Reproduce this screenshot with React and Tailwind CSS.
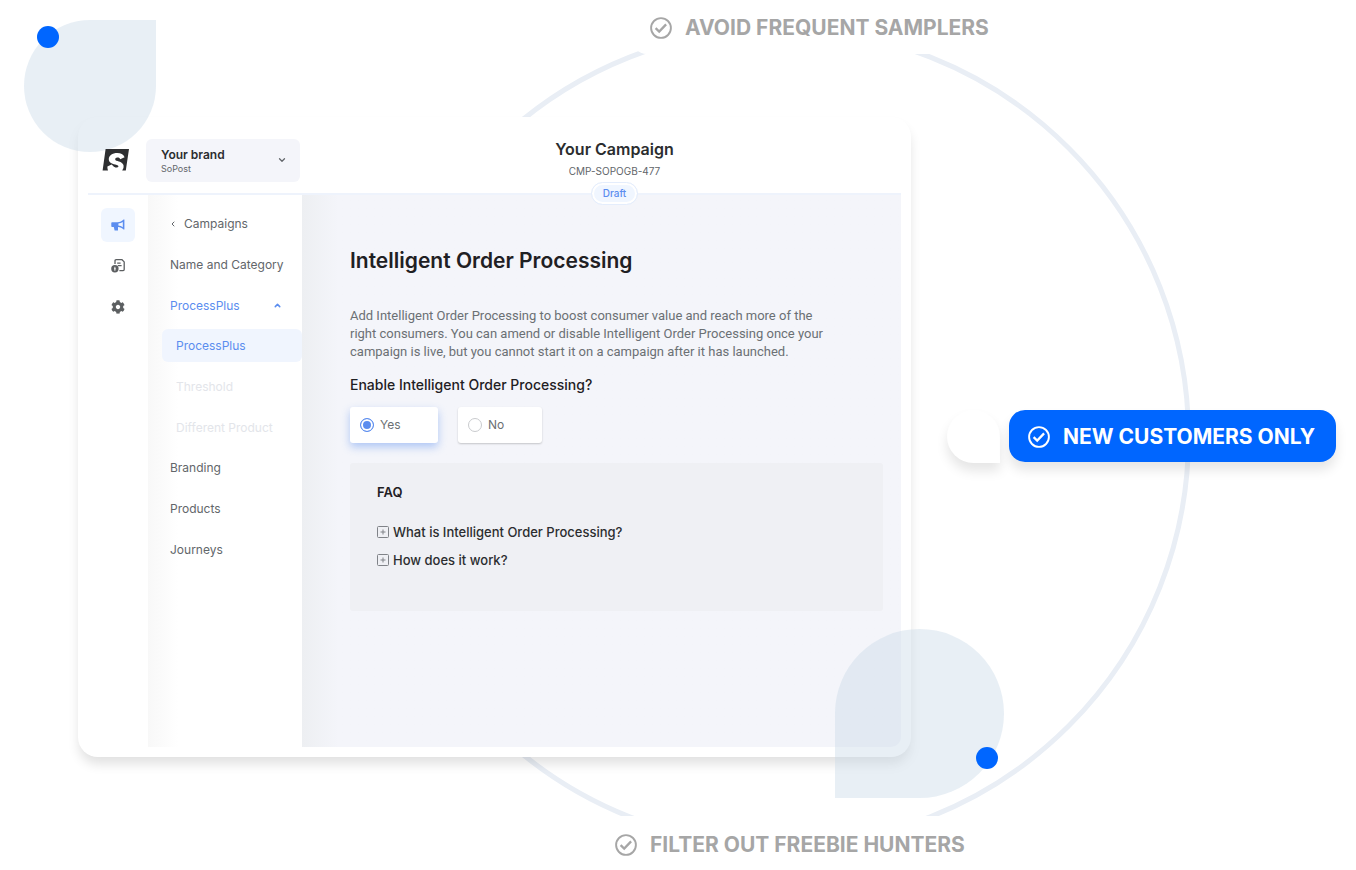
import { useState } from "react";
import { FaCog } from "react-icons/fa";
import { FiChevronDown, FiChevronLeft, FiChevronUp } from "react-icons/fi";

const faqs = ["What is Intelligent Order Processing?", "How does it work?"];

function CheckIcon() {
  return (
    <svg viewBox="0 0 22 22" className="w-[22px] h-[22px] shrink-0" fill="none" stroke="currentColor" aria-hidden="true">
      <circle cx="11" cy="11" r="9.9" strokeWidth="1.9" />
      <path d="M5.6 11.2l3.6 3.4 6.9-7.2" strokeWidth="2.3" />
    </svg>
  );
}

function Pill({ children, className }) {
  return (
    <div
      className={`flex items-center gap-[13px] pl-[19px] pr-5 rounded-2xl text-[21px] leading-6 font-bold whitespace-nowrap shrink-0 ${className}`}
    >
      <CheckIcon />
      <span>{children}</span>
    </div>
  );
}

function Logo() {
  return (
    <svg viewBox="0 0 27 22" className="relative z-20 w-[27px] h-[22px]" aria-label="SoPost">
      <path d="M3.6 0H27L23.8 21.5H20.2Q22 19.5 21.6 16.8C21 13.4 17.5 12.6 14.5 11.8C12.6 11.2 12.8 8.8 15.2 8.6C17 8.5 17.8 9.2 18.2 10.2L22.6 8.2C21.4 5.4 18.8 4 15.4 4C10.2 4 6.8 6.6 6.8 10.2C6.8 13.4 9.4 14.6 13.2 15.4C16 16 16.6 16.6 16.4 17.4C16 18.8 12.6 19 11.2 17L9.6 15.6L5.4 17.6C5.4 19.4 5.6 20.4 6 21.5H0.6Z" fill="#2e2f31" />
    </svg>
  );
}

function MegaphoneIcon() {
  return (
    <svg viewBox="0 0 14 14" className="w-[14px] h-[14px]" aria-hidden="true">
      <path d="M1 4.2H6.4C9 4 11 3 12.6 1.4H13.4V11.6H12.6C11 10 9.4 9.2 7 9.1V12.6H3.6L2.8 9H1Q0.3 9 0.3 8V5.2Q0.3 4.2 1 4.2Z" fill="#5b8def" />
      <path d="M7.4 5.6Q10 5.1 11.8 3.9V9.2Q10 8 7.4 7.6Z" fill="#f0f6ff" />
    </svg>
  );
}

function OrdersIcon() {
  return (
    <svg viewBox="0 0 14 14" className="w-[14px] h-[14px]" fill="none" stroke="#5c5f61" aria-hidden="true">
      <path d="M4 5V1.8Q4 .7 5.1 .7H11L13.2 2.9V10.6Q13.2 11.7 12.1 11.7H8.4" strokeWidth="1.3" />
      <path d="M6.2 4.2H9.6M6.8 6.7H10.6" strokeWidth="1.2" />
      <circle cx="3.9" cy="9.8" r="3.7" fill="#5c5f61" stroke="none" />
      <path d="M3.9 7.8V11.8M3 9.8H4.8" stroke="#fff" strokeWidth=".9" />
    </svg>
  );
}

function NavItem({ children, className = "text-[#62666a]" }) {
  return (
    <li>
      <a href="#" className={`flex items-center h-[33px] px-2 ${className}`}>
        {children}
      </a>
    </li>
  );
}

function Sidebar() {
  return (
    <div className="flex shrink-0 w-[214px]">
      <div className="flex flex-col items-center gap-[7px] w-[60px] pt-[13px]">
        <button aria-label="Campaigns" className="grid place-items-center w-[34px] h-[34px] rounded-md bg-[#f0f6ff]">
          <MegaphoneIcon />
        </button>
        <button aria-label="Orders" className="grid place-items-center w-[34px] h-[34px]">
          <OrdersIcon />
        </button>
        <button aria-label="Settings" className="grid place-items-center w-[34px] h-[34px] text-[#5c5f61]">
          <FaCog size={14} />
        </button>
      </div>

      <nav className="flex flex-col gap-[7px] flex-1 pt-3 pl-[14px] text-xs bg-linear-to-r from-[#f8f8f8] to-white to-20%">
        <ul className="flex flex-col gap-2">
          <NavItem>
            <FiChevronLeft size={8} strokeWidth={3} className="-ml-px mr-[7px]" />
            Campaigns
          </NavItem>
          <NavItem>Name and Category</NavItem>
          <NavItem className="text-[#5b8def]">
            <span className="flex-1">ProcessPlus</span>
            <FiChevronUp size={9} strokeWidth={4} className="mr-3" />
          </NavItem>
        </ul>
        <ul className="flex flex-col gap-2">
          <NavItem className="pl-[14px] rounded-md text-[#5b8def] bg-[#f0f5fe]">ProcessPlus</NavItem>
          <NavItem className="pl-[14px] text-[#e3e5ea]">Threshold</NavItem>
          <NavItem className="pl-[14px] text-[#e3e5ea]">Different Product</NavItem>
        </ul>
        <ul className="flex flex-col gap-2">
          <NavItem>Branding</NavItem>
          <NavItem>Products</NavItem>
          <NavItem>Journeys</NavItem>
        </ul>
      </nav>
    </div>
  );
}

function RadioCard({ value, label, checked, onChange }) {
  return (
    <label
      className={`flex items-center gap-[6px] h-9 pl-[10px] rounded-[3px] bg-white text-xs text-[#6b6f73] cursor-pointer ${
        checked ? "w-[88px] shadow-[0_4px_9px_rgba(91,141,239,0.45)]" : "w-[84px] shadow-[0_1px_2px_rgba(0,0,0,0.2)]"
      }`}
    >
      <input
        type="radio"
        name="enableProcessing"
        value={value}
        checked={checked}
        onChange={onChange}
        className="appearance-none w-[14px] h-[14px] rounded-full border border-[#c9cbce] bg-white checked:border-[#5b8def] checked:bg-[#5b8def] checked:shadow-[inset_0_0_0_2px_white]"
      />
      {label}
    </label>
  );
}

function App() {
  const [enabled, setEnabled] = useState("yes");

  return (
    <div className="relative flex flex-col overflow-hidden bg-white font-['Inter',sans-serif] text-[#2b2d2f]">
      {/* background ring */}
      <svg viewBox="0 0 822 822" className="absolute right-[165px] top-[26px] w-[822px] h-[822px]" fill="none" aria-hidden="true">
        <circle cx="411" cy="411" r="408.5" stroke="#e9eef5" strokeWidth="5" />
      </svg>

      <div className="relative flex justify-end pr-[341px]">
        <Pill className="w-[384px] h-[54px] pt-[2px] bg-white text-[#a6a6a6]">AVOID FREQUENT SAMPLERS</Pill>
      </div>

      <div className="relative flex items-center pt-[63px] pb-[59px] pl-[78px] pr-5">
        <div className="relative flex-1 p-[10px] pt-0 rounded-[20px] bg-white shadow-[0_8px_12px_-1px_rgba(0,0,0,0.12)]">
          <header className="flex h-[78px] border-b-2 border-[#eef3fc]">
            <div className="flex items-center shrink-0 w-[212px] pl-[14px] pt-[10px]">
              <Logo />
              <button
                aria-haspopup="listbox"
                className="flex items-center justify-between flex-1 h-[43px] ml-[17px] pl-[15px] pr-[13px] rounded-md text-left bg-[#f4f5fa]"
              >
                <span className="flex flex-col pt-px">
                  <span className="text-xs leading-[15px] font-semibold">Your brand</span>
                  <span className="text-[9px] leading-[13px] text-[#62666a]">SoPost</span>
                </span>
                <FiChevronDown size={10} strokeWidth={3} className="text-[#62666a]" />
              </button>
            </div>
            <div className="relative flex flex-col items-center flex-1 pl-7 pt-[21px]">
              <h2 className="text-base leading-[23px] font-semibold">Your Campaign</h2>
              <p className="text-[10px] leading-5 text-[#62666a]">CMP-SOPOGB-477</p>
              <div className="absolute inset-x-0 top-[65px] z-10 flex justify-center pl-7">
                <span className="h-[23px] px-[11px] rounded-full border border-[#e4edfc] bg-[#f0f6ff] shadow-[inset_0_0_0_2px_white] text-[10px] leading-[21px] font-medium text-[#5b8def]">
                  Draft
                </span>
              </div>
            </div>
          </header>

          <div className="flex">
            <Sidebar />
            <main className="flex-1 pt-[52px] pb-[136px] pl-12 pr-[18px] rounded-br-[10px] bg-linear-to-r from-[#edeff2] to-[#f4f5fa] to-6%">
              <h1 className="text-[21px] leading-7 font-semibold text-[#1f2023]">Intelligent Order Processing</h1>
              <p className="max-w-[500px] pt-8 font-['Roboto',sans-serif] text-[13px] leading-[18px] text-[#6b7074]">
                Add Intelligent Order Processing to boost consumer value and reach more of the
                <br />
                right consumers. You can amend or disable Intelligent Order Processing once your
                <br />
                campaign is live, but you cannot start it on a campaign after it has launched.
              </p>

              <fieldset className="pt-[14px]">
                <legend className="float-left w-full text-sm leading-5 font-medium text-[#1f2023]">
                  Enable Intelligent Order Processing?
                </legend>
                <div className="clear-both flex gap-5 pt-3">
                  <RadioCard value="yes" label="Yes" checked={enabled === "yes"} onChange={() => setEnabled("yes")} />
                  <RadioCard value="no" label="No" checked={enabled === "no"} onChange={() => setEnabled("no")} />
                </div>
              </fieldset>

              <section className="h-[148px] mt-5 pt-5 pl-[27px] rounded-[3px] bg-[#eff0f4]">
                <h3 className="text-[13px] leading-[18px] font-semibold text-[#1f2023]">FAQ</h3>
                <ul className="flex flex-col gap-2 pt-[21px]">
                  {faqs.map((question) => (
                    <li key={question}>
                      <button className="flex items-center gap-1 text-[13px] leading-5 font-medium">
                        <svg viewBox="0 0 12 12" className="w-3 h-3" fill="none" stroke="#808388" aria-hidden="true">
                          <rect x=".5" y=".5" width="11" height="11" rx="1" />
                          <path d="M3.5 6H8.5M6 3.5V8.5" />
                        </svg>
                        {question}
                      </button>
                    </li>
                  ))}
                </ul>
              </section>
            </main>
          </div>

          {/* floating shapes on the card corners */}
          <div className="absolute -left-[54px] -top-[97px] z-10 w-[132px] h-[132px] rounded-full rounded-tr-none bg-[#c8d9e6]/42 pointer-events-none" />
          <div className="absolute -left-[41px] -top-[91px] z-10 w-[22px] h-[22px] rounded-full bg-[#0066ff]" />
          <div className="absolute -right-[93px] -bottom-[41px] z-10 w-[169px] h-[169px] rounded-full rounded-bl-none bg-[#c8d9e6]/42 pointer-events-none" />
          <div className="absolute -right-[87px] -bottom-[12px] z-10 w-[22px] h-[22px] rounded-full bg-[#0066ff]" />
        </div>

        <div className="flex items-center shrink-0 gap-[9px] pl-9 pb-[2px]">
          <div className="w-[53px] h-[53px] rounded-full rounded-br-none bg-white shadow-[0_8px_12px_rgba(0,0,0,0.1)]" />
          <Pill className="w-[327px] h-[52px] pt-[2px] bg-[#0066ff] text-white shadow-[0_8px_12px_rgba(0,0,0,0.1)]">
            NEW CUSTOMERS ONLY
          </Pill>
        </div>
      </div>

      <div className="relative flex justify-end pr-[365px]">
        <Pill className="w-[395px] h-[54px] pt-1 bg-white text-[#a6a6a6]">FILTER OUT FREEBIE HUNTERS</Pill>
      </div>
    </div>
  );
}

export default App;
